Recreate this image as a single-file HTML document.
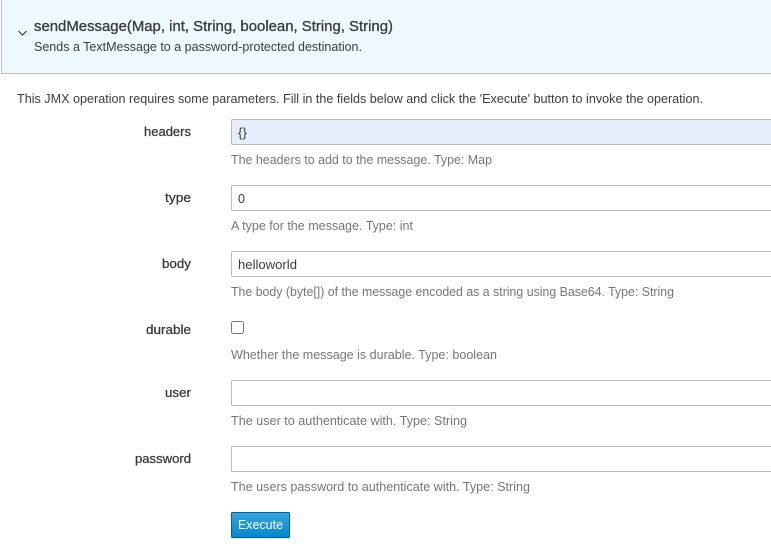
<!DOCTYPE html>
<html><head><meta charset="utf-8">
<style>
html,body{margin:0;padding:0;width:771px;height:547px;overflow:hidden;background:#fff}
svg{display:block;position:absolute;left:0;top:0}
text{font-family:"Liberation Sans",sans-serif;font-size:13px;fill:#3c3c3c}
.h{fill:#72767b}
.l{fill:#363636;stroke:#363636;stroke-width:.25px}
</style></head><body>
<svg width="771" height="547" viewBox="0 0 771 547">
<rect x="1.5" y="-1" width="771" height="74.5" fill="#edf8ff" stroke="#bbb"/>
<path d="M18.5 31l4 4 4-4" fill="none" stroke="#333" stroke-width="1.1"/>
<text x="34" y="31" style="font-size:15px;stroke:#363636;stroke-width:.3px" textLength="359" lengthAdjust="spacingAndGlyphs">sendMessage(Map, int, String, boolean, String, String)</text>
<text x="34" y="51" textLength="328" lengthAdjust="spacingAndGlyphs">Sends a TextMessage to a password-protected destination.</text>
<text x="17" y="103" textLength="686" lengthAdjust="spacingAndGlyphs">This JMX operation requires some parameters. Fill in the fields below and click the 'Execute' button to invoke the operation.</text>

<text class="l" x="144" y="136" textLength="47" lengthAdjust="spacingAndGlyphs">headers</text>
<rect x="231.5" y="119.5" width="545" height="25" rx="1" fill="#e8eefb" stroke="#bbb"/>
<text x="238" y="137" textLength="9" lengthAdjust="spacingAndGlyphs">{}</text>
<text class="h" x="231" y="164" textLength="261" lengthAdjust="spacingAndGlyphs">The headers to add to the message. Type: Map</text>

<text class="l" x="165" y="202" textLength="26" lengthAdjust="spacingAndGlyphs">type</text>
<rect x="231.5" y="185.5" width="545" height="25" rx="1" fill="#fff" stroke="#bbb"/>
<text x="238" y="203" textLength="7" lengthAdjust="spacingAndGlyphs">0</text>
<text class="h" x="231" y="230" textLength="182" lengthAdjust="spacingAndGlyphs">A type for the message. Type: int</text>

<text class="l" x="162" y="268" textLength="29" lengthAdjust="spacingAndGlyphs">body</text>
<rect x="231.5" y="251.5" width="545" height="25" rx="1" fill="#fff" stroke="#bbb"/>
<text x="238" y="269" textLength="59" lengthAdjust="spacingAndGlyphs">helloworld</text>
<text class="h" x="231" y="296" textLength="443" lengthAdjust="spacingAndGlyphs">The body (byte[]) of the message encoded as a string using Base64. Type: String</text>

<text class="l" x="146" y="334" textLength="45" lengthAdjust="spacingAndGlyphs">durable</text>
<rect x="231.5" y="321.5" width="12" height="12" rx="2" fill="#fff" stroke="#767676"/>
<text class="h" x="231" y="359" textLength="266" lengthAdjust="spacingAndGlyphs">Whether the message is durable. Type: boolean</text>

<text class="l" x="165" y="397" textLength="26" lengthAdjust="spacingAndGlyphs">user</text>
<rect x="231.5" y="380.5" width="545" height="25" rx="1" fill="#fff" stroke="#bbb"/>
<text class="h" x="231" y="425" textLength="236" lengthAdjust="spacingAndGlyphs">The user to authenticate with. Type: String</text>

<text class="l" x="135" y="463" textLength="56" lengthAdjust="spacingAndGlyphs">password</text>
<rect x="231.5" y="446.5" width="545" height="25" rx="1" fill="#fff" stroke="#bbb"/>
<text class="h" x="231" y="491" textLength="299" lengthAdjust="spacingAndGlyphs">The users password to authenticate with. Type: String</text>

<defs><linearGradient id="b" x1="0" y1="0" x2="0" y2="1"><stop offset="0" stop-color="#39a5dc"/><stop offset="1" stop-color="#0088ce"/></linearGradient></defs>
<rect x="231" y="538" width="59" height="1" fill="#e4e4e4"/>
<rect x="231.5" y="512.5" width="58" height="25" rx="1" fill="url(#b)" stroke="#00659c"/>
<text x="238" y="529" style="fill:#fff" textLength="45" lengthAdjust="spacingAndGlyphs">Execute</text>
</svg>
</body></html>
